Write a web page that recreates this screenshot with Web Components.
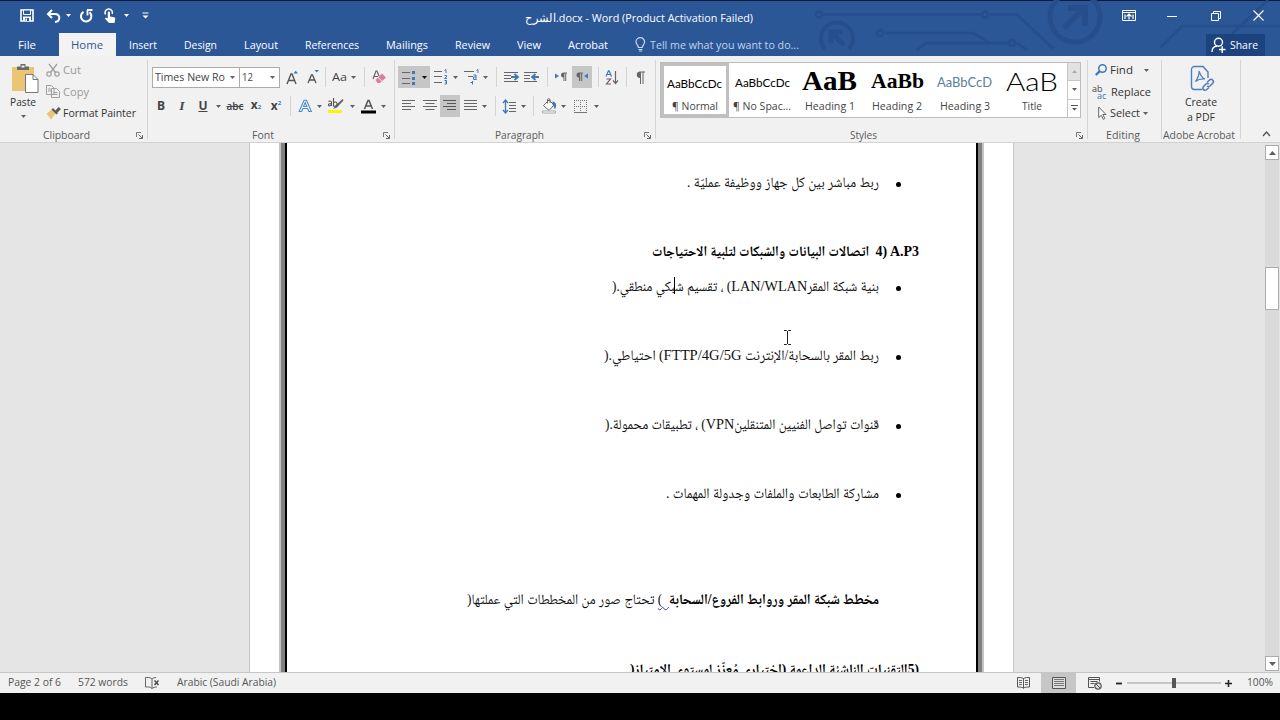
<!DOCTYPE html>
<html lang="en">
<head>
<meta charset="utf-8">
<title>الشرح.docx - Word</title>
<style>
	html, body {
		margin: 0;
		height: 100%;
		overflow: hidden;
		background: #000;
	}

	body {
		font: 11.5px/16px "Open Sans", "Noto Sans", sans-serif;
		color: #444;
	}
</style>
</head>
<body>
<word-window></word-window>

<script>
// name: [width, height, markup]
const ICONS = {
	save: [14, 13, '<path d="M1 1h12v11H1z" fill="none" stroke="#fff" stroke-width="1.6"/><path d="M3.5 1h7v4.500h-7z" fill="#2b579a" stroke="#fff"/><path d="M3 7.500h8V12H3z" fill="#fff"/><path d="M5 9h4v3H5z" fill="#2b579a"/><path d="M5.500 9.500h1.500V12H5.500z" fill="#fff"/>'],
	undo: [15, 14, '<path d="M6 1L2 5l4 4M2.500 5h6.500c6 0 5.500 7.500 0 8" fill="none" stroke="#fff" stroke-width="2"/>'],
	redo: [14, 14, '<path d="M4.500 2.800A5.200 5.200 0 1 0 10.500 3.300" fill="none" stroke="#fff" stroke-width="2"/><path d="M8 1h5.500M8.500 1v5.500" fill="none" stroke="#fff" stroke-width="1.800"/>'],
	touch: [14, 16, '<path d="M2.500 6.500A3.700 3.700 0 1 1 9.200 6" fill="none" stroke="#fff" stroke-width="1.500"/><path d="M4.800 4.500c0-1.400 2.200-1.400 2.200 0v4l4 .8c1 .3 1.300.8 1.200 1.700L11.500 15H6L2 10.800c0-1.200 1.500-1.300 2.800-.2z" fill="#fff"/>'],
	customize: [7, 7, '<path d="M.5 1h6" stroke="#fff"/><path d="M.5 3.500h6l-3 3z" fill="#fff"/>'],
	ribbonopts: [14, 11, '<path d="M.5.5h13v10H.5zM1 2.500h12" fill="none" stroke="#fff"/><path d="M7 9.500v-5M4.500 6.500L7 4l2.500 2.500M3 4.500V9M11 4.500V9" fill="none" stroke="#fff" stroke-width="1.200"/>'],
	minimize: [10, 10, '<path d="M0 5.500h10" stroke="#fff"/>'],
	restore: [10, 10, '<path d="M.5 2.500h7v7h-7zM2.500 2.500v-2h7v7h-2" fill="none" stroke="#fff"/>'],
	close: [11, 11, '<path d="M.5.5l10 10M10.500.5l-10 10" stroke="#fff" stroke-width="1.100"/>'],
	bulb: [11, 15, '<path d="M3.500 10.500c0-2-2.500-3-2.500-5.500a4.300 4.300 0 0 1 8.600 0c0 2.500-2.400 3.500-2.400 5.500zM3.500 12.500h4M4 14h3" fill="none" stroke="#c9d8ef" stroke-width="1.200"/>'],
	share: [15, 16, '<circle cx="7.500" cy="5.200" r="4" fill="none" stroke="#fff" stroke-width="1.400"/><path d="M1 15c0-3.500 2-5.800 5-5.800M8 12.500h6.500M11.200 9.200V16" fill="none" stroke="#fff" stroke-width="1.400"/>'],
	paste: [28, 29, '<path d="M1 3h22v24H1z" fill="#ecc572"/><path d="M6 6V2.500h3.500V0h5v2.500H18V6z" fill="#6a6a6a"/><path d="M10.500 1.500h3v2h-3z" fill="#f1f1f1"/><path d="M14.500 10.500h7.500l5 5v13H14.500z" fill="#fff" stroke="#777"/><path d="M22 10.500v5h5" fill="none" stroke="#777"/>'],
	cut: [14, 14, '<path d="M3 1l6.500 8.500M11 1L4.500 9.500" stroke="#a0a0a0" stroke-width="1.300"/><circle cx="3" cy="11" r="2.200" fill="none" stroke="#a0a0a0" stroke-width="1.200"/><circle cx="11" cy="11" r="2.200" fill="none" stroke="#a0a0a0" stroke-width="1.200"/>'],
	copy: [14, 13, '<path d="M.5.500h5l2.500 2.500v6.500H.5zM5.500 3.500h5l3 3v6h-8z" fill="#f1f1f1" stroke="#a0a0a0"/><path d="M2 4h3M2 6h3M7.500 7.500h4M7.500 9.500h4" stroke="#a0a0a0"/>'],
	brush: [15, 13, '<path d="M6 2l4 4-5 6.500L.5 6.800z" fill="#ecc572"/><path d="M5.500 2.500L7 1l5 5-1.500 1.500zM9 4l3.500-4L15 2l-4 4z" fill="#5b5b5b"/>'],
	launcher: [7, 7, '<path d="M.5 5V.5H5" fill="none" stroke="#777"/><path d="M2.500 2.500L6 6M6.500 3v3.500H3" fill="none" stroke="#666"/>'],
	caret: [5, 3, '<path d="M0 0h5L2.500 3z" fill="#606060"/>'],
	caretdark: [5, 3, '<path d="M0 0h5L2.500 3z" fill="#111"/>'],
	caretwhite: [5, 3, '<path d="M0 0h5L2.500 3z" fill="#fff"/>'],
	grow: [12, 15, '<path d="M1 14L5 4h1l4 10M2.500 10.500h6" fill="none" stroke="#555" stroke-width="1.400"/><path d="M7.500 3.500L9.700.8 12 3.500z" fill="#3f78b5"/>'],
	shrink: [12, 14, '<path d="M1 13L4.500 5h1L9 13M2.500 10h5" fill="none" stroke="#555" stroke-width="1.300"/><path d="M7.500 0H12L9.700 2.500z" fill="#3f78b5"/>'],
	eraser: [14, 14, '<path d="M1 9L4 1h1l2 5M2 6.500h4" fill="none" stroke="#666" stroke-width="1.200"/><path d="M10 3.500l4 4-6 5.500H5.500L3.500 10z" fill="#dc7f98"/><path d="M6 7.500l4.300 4" stroke="#f1f1f1"/>'],
	effect: [15, 14, '<path d="M1.200 12.500L6 1.200h2.500l4.800 11.300h-2.500l-1.100-3H4.800l-1.100 3zM5.500 7.500h3.400L7.200 3.400z" fill="#fff" stroke="#4c8bd0" stroke-width="1.100"/>'],
	highlight: [17, 16, '<path d="M1 12h14v3H1z" fill="#fdf400"/><path d="M15.500 1L9 7l-3 4 4-1.500 6.500-7z" fill="#666"/><path d="M1.500 3.500c1-.8 3-.8 3 1v3.500M4.500 5.500C2 5.500 1.200 6.200 1.500 7.200c.4 1 2.300.8 3-.7M6.500 0v8c2.500.8 3.800-1 3.500-2.500C9.700 3.700 7.500 3.500 6.500 5" fill="none" stroke="#555" stroke-width="1.100"/>'],
	fontcolor: [15, 15, '<path d="M0 11.500h15v3H0z" fill="#000"/><path d="M3.500 10L7 1.500h1L11.500 10M5 7h5" fill="none" stroke="#555" stroke-width="1.500"/>'],
	bullets: [13, 15, '<path d="M0 2.500h8M0 8.500h8M0 13.500h8" stroke="#666"/><path d="M10 1h3v3h-3zM10 7h3v3h-3zM10 12h3v3h-3z" fill="#3f78b5"/>'],
	numbering: [14, 16, '<path d="M0 2.500h8M0 7.500h8M0 13.500h8" stroke="#666"/><path d="M10.500 1.500L12 .5V4M10.500 6.500h2v1.500l-2 1.500h2.500M10.500 11.500h2v3.500h-2M11 13h1.500" fill="none" stroke="#3f78b5"/>'],
	multilevel: [16, 16, '<path d="M0 2.500h10M4 7.500h5M6.500 13.500H8" stroke="#666"/><path d="M12.500 1.500L14 .5V4M9.500 6h2.500v4.500M12 8H9.500v2.500h3M8.500 12v3.500" fill="none" stroke="#3f78b5"/>'],
	outdent: [15, 12, '<path d="M0 1.500h14M0 4.500h7M0 7.500h7M0 10.500h14" stroke="#666"/><path d="M7 6h6M10.500 3l3.500 3-3.500 3" fill="none" stroke="#3f78b5" stroke-width="1.800"/>'],
	indent: [15, 12, '<path d="M0 1.500h13M0 4.500h6M0 7.500h6M0 10.500h13" stroke="#666"/><path d="M15 6H9M11.500 3L8 6l3.500 3" fill="none" stroke="#3f78b5" stroke-width="1.800"/>'],
	ltr: [12, 10, '<path d="M0 1.500v5L4 4z" fill="#3f78b5"/><path d="M8.500 5.500a2.500 2.500 0 0 1 0-5H12v1h-.8v7.500h-1V1.500h-.8v7.500h-1z" fill="#666"/>'],
	rtl: [12, 10, '<path d="M12 1.500v5L8 4z" fill="#3f78b5"/><path d="M3 5.500a2.500 2.500 0 0 1 0-5h4v1h-.8v7.500h-1V1.500h-.9v7.500H3z" fill="#666"/>'],
	sort: [14, 15, '<path d="M1 6.500L3.500.8h.6l2.400 5.700M2 4.500h3.500" fill="none" stroke="#3f78b5" stroke-width="1.200"/><path d="M1.500 9h4L1.500 14h4.500" fill="none" stroke="#7a5276" stroke-width="1.200"/><path d="M10.500 1v12M8 10.500l2.500 3 2.500-3" fill="none" stroke="#666" stroke-width="1.200"/>'],
	pilcrow: [10, 13, '<path d="M4.500 7A3.300 3.300 0 0 1 4.500.5H10v1H8.500V13h-1V1.500h-1.500V13H5V7z" fill="#666"/>'],
	left: [14, 12, '<path d="M0 .5h13M0 3.500h9M0 6.500h13M0 9.500h9" stroke="#666"/>'],
	center: [14, 12, '<path d="M0 .5h14M2.500 3.500h9M0 6.500h14M2.500 9.500h9" stroke="#666"/>'],
	right: [14, 12, '<path d="M0 .5h13M4 3.500h9M0 6.500h13M4 9.500h9" stroke="#555"/>'],
	justify: [14, 12, '<path d="M0 .5h13M0 3.500h13M0 6.500h13M0 9.500h13" stroke="#666"/>'],
	spacing: [14, 15, '<path d="M6 3.500h7M6 6.500h7M6 9.500h7M6 12.500h7" stroke="#666"/><path d="M2.500 1.500v12M0 4l2.500-3L5 4M0 11l2.500 3L5 11" fill="none" stroke="#3f78b5" stroke-width="1.300"/>'],
	shading: [17, 16, '<path d="M2.500 7.500L8 2l5 5-5 5.500z" fill="#fff" stroke="#666"/><path d="M6.500 5.500V2c0-1.800 2.500-1.800 2.500 0v3" fill="none" stroke="#666"/><path d="M11.500 3.500c4 .5 4.500 4 2.500 8-1-2.500-1.500-4-2.500-5z" fill="#3f78b5"/><path d="M1.500 13h13v2h-13z" fill="#fff" stroke="#aaa"/>'],
	borders: [13, 13, '<path d="M0 .5h13M0 6.500h13M.5 0v12M6.500 0v12M12.500 0v12" fill="none" stroke="#777" stroke-dasharray="1 1"/><path d="M0 12.500h13" stroke="#777"/>'],
	find: [12, 12, '<circle cx="7.500" cy="4.500" r="3.700" fill="none" stroke="#3f78b5" stroke-width="1.500"/><path d="M4.800 7.200L.8 11" stroke="#3f78b5" stroke-width="2.300"/>'],
	select: [9, 14, '<path d="M.7 1l7.300 7.500H4.800l2 4-1.500.8-2-4L.7 11.500z" fill="#fff" stroke="#666"/>'],
	pdf: [25, 28, '<path d="M12 24.500H4.500a3 3 0 0 1-3-3v-17a3 3 0 0 1 3-3H13l5 5.500v6" fill="none" stroke="#4e7cc0" stroke-width="1.400"/><path d="M9 6c1.500 4 2.500 7 6 8-3-.3-7 .5-9.500 2.500C7.500 13.500 9.500 9 9 6z" fill="none" stroke="#4e7cc0" stroke-width="1.200"/><path d="M17 17.500l2.500-2.500c2-2 5.300.8 3.200 3.200L20 21c-1 .8-2 .8-3 0M19 19c-1-.8-2-.8-3 0l-2.500 2.500c-2 2.400 1 5 3.200 3L19 22.500" fill="none" stroke="#4e7cc0" stroke-width="1.500"/>'],
	collapse: [9, 6, '<path d="M1 5l3.500-4L8 5" fill="none" stroke="#555" stroke-width="1.400"/>'],
	up: [7, 4, '<path d="M0 4h7L3.500 0z" fill="#606060"/>'],
	down: [7, 4, '<path d="M0 0h7L3.500 4z" fill="#606060"/>'],
	upoff: [5, 3, '<path d="M0 3h5L2.500 0z" fill="#aaa"/>'],
	more: [7, 6, '<path d="M0 .5h7" stroke="#555"/><path d="M1 3h5L3.500 5.500z" fill="#555"/>'],
	proof: [15, 12, '<path d="M7 2C5.500 0 2 .5.500.500v9.500c2 0 5-.5 6.500 1.500V2c1-1 2.500-1.500 4-1.500M7 11.500c1-1 3-1.500 5-1.500" fill="none" stroke="#666"/><path d="M9.500 3.500l4 4.500M13.500 3.500l-4 4.500" stroke="#444" stroke-width="1.400"/>'],
	read: [13, 12, '<path d="M6.500 1.500C5 .5 2.500.500.500.500v9.500c2 0 4.500 0 6 1 1.500-1 4-1 6-1V.5c-2 0-4.500 0-6 1v10" fill="none" stroke="#555"/><path d="M2 3.500h3M2 5.500h3M2 7.500h3M8 3.500h3M8 5.500h3M8 7.500h3" stroke="#666"/>'],
	print: [14, 12, '<path d="M.5.5h13v11H.5z" fill="#ddd" stroke="#555"/><path d="M2 2.500h10M2 4.500h10M2 6.500h10M2 8.500h10" stroke="#777"/>'],
	web: [14, 13, '<path d="M6 10.500H.5v-10h11v4M.5 2.500h11M2.500 4.500h7M2.500 6.500h4" fill="none" stroke="#555"/><circle cx="10" cy="9" r="3.200" fill="#ddd" stroke="#555" stroke-width="1.200"/><path d="M8 7l4 4" stroke="#555"/>'],
	minus: [7, 7, '<path d="M0 3.500h6" stroke="#222" stroke-width="1.800"/>'],
	plus: [7, 7, '<path d="M0 3.500h7M3.500 0v7" stroke="#222" stroke-width="1.600"/>'],
	ibeam: [7, 15, '<path d="M0 .5h2.500l1 1 1-1H7M3.500 1v13M0 14.500h2.500l1-1 1 1H7" fill="none" stroke="#222"/>']
};

class WordIcon extends HTMLElement {
	constructor() {
		super();
		this.attachShadow({ mode: 'open' });
	}

	connectedCallback() {
		const [w, h, markup] = ICONS[this.getAttribute('name')];
		this.shadowRoot.innerHTML = `
			<style>
				:host { display: inline-flex; flex: none; }
				svg { display: block; overflow: visible; }
			</style>
			<svg width="${w}" height="${h}" viewBox="0 0 ${w} ${h}">${markup}</svg>
		`;
	}
}

/** A cell of fixed width that centres what it holds; "on" is the pressed look */
class ToolCell extends HTMLElement {
	constructor() {
		super();
		this.attachShadow({ mode: 'open' });
	}

	connectedCallback() {
		const icon = this.getAttribute('icon');
		this.shadowRoot.innerHTML = `
			<style>
				:host {
					display: flex;
					flex: none;
					align-items: center;
					justify-content: center;
					width: ${this.getAttribute('w')}px;
					height: 22px;
				}
				:host([on]) { background: #c6c6c6; }
				:host([sep])::before {
					content: "";
					width: 1px;
					height: 20px;
					background: #d4d4d4;
				}
			</style>
			${icon ? `<word-icon name="${icon}"></word-icon>` : ''}
			<slot></slot>
		`;
	}
}

class RibbonGroup extends HTMLElement {
	constructor() {
		super();
		this.attachShadow({ mode: 'open' });
	}

	connectedCallback() {
		this.shadowRoot.innerHTML = `
			<style>
				:host {
					display: flex;
					flex: none;
					flex-direction: column;
					box-sizing: border-box;
					width: ${this.getAttribute('w')}px;
					height: 86px;
				}
				.main {
					box-sizing: border-box;
					border-right: 1px solid #d4d4d4;
					margin-top: 4px;
					height: 67px;
				}
				footer {
					display: flex;
					align-items: center;
					height: 12px;
					padding-right: 4px;
					border-right: 1px solid #d4d4d4;
					color: #5a5a5a;
				}
				footer div {
					flex: 1;
					display: flex;
					justify-content: center;
					margin-top: 4px;
					padding-right: ${this.getAttribute('shift') || 0}px;
				}
				footer word-icon { margin-top: 5px; }
			</style>
			<div class="main"><slot></slot></div>
			<footer>
				<div><fit-text w="${this.getAttribute('lw')}">${this.getAttribute('label')}</fit-text></div>
				${this.hasAttribute('launcher') ? '<word-icon name="launcher"></word-icon>' : ''}
			</footer>
		`;
	}
}

class StyleTile extends HTMLElement {
	constructor() {
		super();
		this.attachShadow({ mode: 'open' });
	}

	connectedCallback() {
		this.shadowRoot.innerHTML = `
			<style>
				:host {
					display: flex;
					flex: none;
					flex-direction: column;
					align-items: center;
					box-sizing: border-box;
					width: 67.5px;
					height: 54px;
					overflow: hidden;
				}
				:host([on]) { border: 3px solid #c0c0c0; }
				.preview {
					display: flex;
					align-items: center;
					height: 35px;
					color: #000;
				}
				:host([on]) .preview { height: 32px; }
			</style>
			<div class="preview"><slot></slot></div>
			<fit-text w="${this.getAttribute('lw')}">${this.getAttribute('label')}</fit-text>
		`;
	}
}

class TitleBar extends HTMLElement {
	constructor() {
		super();
		this.attachShadow({ mode: 'open' });
		this.shadowRoot.innerHTML = `
			<style>
				:host {
					display: block;
					position: relative;
					height: 56px;
					box-sizing: border-box;
					background: #2b5797;
					border-top: 1px solid #0a1a3c;
					color: #fff;
				}
				.art { position: absolute; left: 800px; top: -1px; }
				.top, .tabs { position: relative; display: flex; align-items: center; }
				.top { height: 29px; }
				.quick, .controls { display: flex; align-items: center; }
				.quick { width: 509px; padding-left: 16px; }
				.controls { flex: 1; justify-content: flex-end; }
				.title { margin-top: 5px; }
				.tabs { height: 23px; margin-top: 3px; padding-left: 18px; }
				.tabs fit-text { margin-right: 27px; }
				.home {
					display: flex;
					align-items: center;
					justify-content: center;
					width: 57px;
					height: 23px;
					margin: 0 13px 0 -4px;
					background: #f3f3f3;
					color: #2b579a;
				}
				.home fit-text { margin: 0 1px 0 0; }
				.tabs word-icon { margin-right: 4px; }
				.tell { color: #c3d3ea; }
				.share {
					display: flex;
					align-items: center;
					justify-content: center;
					width: 59px;
					height: 22px;
					margin: 0 15px 0 auto;
					background: #1d437e;
				}
				.share fit-text { margin: 0 2px 0 0; }
			</style>
			<svg class="art" width="480" height="56" viewBox="800 0 480 56" fill="none" stroke="#264e8b" stroke-width="2.500">
				<path d="M823 14.500h158M990 14.500h27l36 34M885 33h88l17 10h18M917 50l9-7h64M1017 43l10 7M1160 48l22-22h98M1232 34l36-34"/>
				<circle cx="819" cy="14.500" r="3"/>
				<circle cx="985" cy="14.500" r="3"/>
				<circle cx="880" cy="33" r="3"/>
				<circle cx="1012" cy="43" r="3"/>
				<path d="M825 49a16 16 0 1 1 24 0" stroke-width="4"/>
				<path d="M844 45l-12-12M831 43V32h12" stroke-width="5"/>
				<circle cx="1075" cy="17" r="25" stroke-width="5"/>
				<path d="M1064 28l20-20M1068 8h17v18" stroke-width="6"/>
			</svg>
			<div class="top">
				<div class="quick">
					<tool-cell w="22" icon="save"></tool-cell>
					<tool-cell w="31" icon="undo"></tool-cell>
					<tool-cell w="5" icon="caretwhite" style="margin-left:-3px"></tool-cell>
					<tool-cell w="26" icon="redo" style="margin-left:2px"></tool-cell>
					<tool-cell w="22" icon="touch"></tool-cell>
					<tool-cell w="11" icon="caretwhite"></tool-cell>
					<tool-cell w="27" icon="customize"></tool-cell>
				</div>
				<fit-text class="title" w="228">الشرح.docx - Word (Product Activation Failed)</fit-text>
				<div class="controls">
					<tool-cell w="43" icon="ribbonopts"></tool-cell>
					<tool-cell w="44" icon="minimize"></tool-cell>
					<tool-cell w="43" icon="restore"></tool-cell>
					<tool-cell w="43" icon="close"></tool-cell>
				</div>
			</div>
			<div class="tabs">
				<fit-text w="18">File</fit-text>
				<div class="home"><fit-text w="32">Home</fit-text></div>
				<fit-text w="28">Insert</fit-text>
				<fit-text w="33">Design</fit-text>
				<fit-text w="34">Layout</fit-text>
				<fit-text w="54">References</fit-text>
				<fit-text w="42">Mailings</fit-text>
				<fit-text w="35">Review</fit-text>
				<fit-text w="24">View</fit-text>
				<fit-text w="40">Acrobat</fit-text>
				<word-icon name="bulb"></word-icon>
				<fit-text class="tell" w="149">Tell me what you want to do...</fit-text>
				<div class="share"><word-icon name="share"></word-icon><fit-text w="28">Share</fit-text></div>
			</div>
		`;
	}
}

class WordRibbon extends HTMLElement {
	constructor() {
		super();
		this.attachShadow({ mode: 'open' });
		this.shadowRoot.innerHTML = `
			<style>
				:host {
					display: flex;
					box-sizing: border-box;
					height: 87px;
					background: #f1f1f1;
					border-bottom: 1px solid #d2d2d2;
				}
				.row { display: flex; align-items: center; height: 22px; margin-top: 6px; }
				.row + .row { margin-top: 7px; }
				.clip { display: flex; }
				.paste {
					display: flex;
					flex-direction: column;
					align-items: center;
					width: 46px;
					padding-top: 4px;
					color: #333;
				}
				.paste word-icon:first-child { margin-left: 3px; }
				.paste fit-text { margin: 1px 0 5px; }
				.lines { display: flex; flex-direction: column; gap: 5.500px; padding-top: 2px; color: #333; }
				.lines div { display: flex; align-items: center; height: 16px; gap: 3px; }
				.off { color: #999; }
				.combo {
					display: flex;
					align-items: center;
					justify-content: space-between;
					box-sizing: border-box;
					height: 21px;
					padding: 0 4px 0 2px;
					border: 1px solid #ababab;
					background: #fff;
				}
				b, i, u, s { font-size: 12px; color: #444; }
				i { font-family: "Liberation Serif", serif; font-weight: bold; font-size: 13.500px; }
				u { font-weight: bold; }
				s { font-size: 10px; font-weight: 600; }
				b small { font-size: 6px; color: #3f78b5; }
				sup { line-height: 0; }
				.gallery {
					display: flex;
					box-sizing: border-box;
					width: 421px;
					height: 56px;
					margin: 2px 0 0 4px;
					border: 1px solid #bdbdbd;
					background: #fff;
				}
				.scroll {
					display: flex;
					flex-direction: column;
					flex: 1;
					margin-left: 1px;
					border-left: 1px solid #c6c6c6;
				}
				.scroll div {
					display: flex;
					flex: 1;
					align-items: center;
					justify-content: center;
					border-bottom: 1px solid #c6c6c6;
				}
				.scroll div:first-child { background: #e1e1e1; }
				.scroll div:last-child { border: 0; }
				.preview { font-family: Lato, sans-serif; margin-top: 4px; }
				.serif { font-family: "Liberation Serif", serif; font-weight: bold; }
				.big { line-height: 32px; margin-top: 0; }
				.edit { padding: 2px 0 0 7px; }
				.edit word-icon:last-child { margin-left: 8px; }
				.swap { display: flex; flex-direction: column; font-size: 9px; line-height: 7px; width: 16px; color: #444; }
				.swap span:last-child { margin-left: 5px; color: #3f78b5; }
				.acrobat {
					display: flex;
					flex-direction: column;
					align-items: center;
					padding: 5px 1px 0 0;
					color: #333;
					line-height: 15px;
				}
				.acrobat word-icon { margin: 0 0 1px 4px; }
				.end { display: flex; flex: 1; align-items: flex-end; justify-content: flex-end; padding: 0 9px 5px 0; }
			</style>
			<ribbon-group w="148" label="Clipboard" lw="47" shift="4" launcher>
				<div class="clip">
					<div class="paste">
						<word-icon name="paste"></word-icon>
						<fit-text w="26">Paste</fit-text>
						<word-icon name="caret"></word-icon>
					</div>
					<div class="lines">
						<div class="off"><word-icon name="cut"></word-icon><fit-text w="18">Cut</fit-text></div>
						<div class="off"><word-icon name="copy"></word-icon><fit-text w="26">Copy</fit-text></div>
						<div><word-icon name="brush" style="margin-right:-1px"></word-icon><fit-text w="73">Format Painter</fit-text></div>
					</div>
				</div>
			</ribbon-group>
			<ribbon-group w="247" label="Font" lw="22" shift="5" launcher>
				<div class="row" style="padding-left:4px">
					<div class="combo" style="width:88px"><fit-text w="70">Times New Ro</fit-text><word-icon name="caret"></word-icon></div>
					<div class="combo" style="width:40px;border-left:0"><fit-text w="11">12</fit-text><word-icon name="caret"></word-icon></div>
					<tool-cell w="23" icon="grow"></tool-cell>
					<tool-cell w="19" icon="shrink"></tool-cell>
					<tool-cell w="6" sep></tool-cell>
					<tool-cell w="22"><fit-text w="15">Aa</fit-text></tool-cell>
					<tool-cell w="7" icon="caret"></tool-cell>
					<tool-cell w="15" sep></tool-cell>
					<tool-cell w="14" icon="eraser"></tool-cell>
				</div>
				<div class="row" style="padding-left:2px">
					<tool-cell w="22"><b>B</b></tool-cell>
					<tool-cell w="20"><i>I</i></tool-cell>
					<tool-cell w="22"><u>U</u></tool-cell>
					<tool-cell w="9" icon="caret"></tool-cell>
					<tool-cell w="24"><s>abc</s></tool-cell>
					<tool-cell w="18"><b>x<small>2</small></b></tool-cell>
					<tool-cell w="22"><b>x<sup><small>2</small></sup></b></tool-cell>
					<tool-cell w="7" sep></tool-cell>
					<tool-cell w="22" icon="effect"></tool-cell>
					<tool-cell w="6" icon="caret"></tool-cell>
					<tool-cell w="27" icon="highlight"></tool-cell>
					<tool-cell w="6" icon="caret"></tool-cell>
					<tool-cell w="26" icon="fontcolor"></tool-cell>
					<tool-cell w="5" icon="caret"></tool-cell>
				</div>
			</ribbon-group>
			<ribbon-group w="261" label="Paragraph" lw="49" shift="1" launcher>
				<div class="row" style="padding-left:3px">
					<tool-cell w="32" on><word-icon name="bullets" style="margin-right:7px"></word-icon><word-icon name="caretdark"></word-icon></tool-cell>
					<tool-cell w="21" icon="numbering"></tool-cell>
					<tool-cell w="9" icon="caret"></tool-cell>
					<tool-cell w="23" icon="multilevel"></tool-cell>
					<tool-cell w="5" icon="caret"></tool-cell>
					<tool-cell w="16" sep></tool-cell>
					<tool-cell w="14" icon="outdent"></tool-cell>
					<tool-cell w="27" icon="indent"></tool-cell>
					<tool-cell w="4" sep></tool-cell>
					<tool-cell w="23" icon="ltr"></tool-cell>
					<tool-cell w="20" icon="rtl" on></tool-cell>
					<tool-cell w="12" sep></tool-cell>
					<tool-cell w="15" icon="sort"></tool-cell>
					<tool-cell w="14" sep></tool-cell>
					<tool-cell w="14" icon="pilcrow"></tool-cell>
				</div>
				<div class="row" style="padding-left:3px">
					<tool-cell w="21" icon="left"></tool-cell>
					<tool-cell w="21" icon="center"></tool-cell>
					<tool-cell w="20" icon="right" on></tool-cell>
					<tool-cell w="21" icon="justify"></tool-cell>
					<tool-cell w="6" icon="caret"></tool-cell>
					<tool-cell w="16" sep></tool-cell>
					<tool-cell w="14" icon="spacing"></tool-cell>
					<tool-cell w="13" icon="caret"></tool-cell>
					<tool-cell w="7" sep></tool-cell>
					<tool-cell w="24" icon="shading"></tool-cell>
					<tool-cell w="5" icon="caret"></tool-cell>
					<tool-cell w="29" icon="borders"></tool-cell>
					<tool-cell w="3" icon="caret"></tool-cell>
				</div>
			</ribbon-group>
			<ribbon-group w="432" label="Styles" lw="27" shift="6" launcher>
				<div class="gallery">
					<style-tile label="¶ Normal" lw="46" on><fit-text class="preview" w="55" size="11.5">AaBbCcDc</fit-text></style-tile>
					<style-tile label="¶ No Spac..." lw="58"><fit-text class="preview" w="55" size="11.5">AaBbCcDc</fit-text></style-tile>
					<style-tile label="Heading 1" lw="50"><fit-text class="serif big" w="55" size="27">AaB</fit-text></style-tile>
					<style-tile label="Heading 2" lw="50"><fit-text class="serif" w="53" size="21">AaBb</fit-text></style-tile>
					<style-tile label="Heading 3" lw="50"><fit-text class="preview" w="55" size="12.5" style="color:#5b8097">AaBbCcD</fit-text></style-tile>
					<style-tile label="Title" lw="20"><fit-text class="preview big" w="52" size="26" style="font-weight:300;margin-top:0">AaB</fit-text></style-tile>
					<div class="scroll">
						<div><word-icon name="upoff"></word-icon></div>
						<div><word-icon name="caret"></word-icon></div>
						<div><word-icon name="more"></word-icon></div>
					</div>
				</div>
			</ribbon-group>
			<ribbon-group w="74" label="Editing" lw="34">
				<div class="lines edit">
					<div><word-icon name="find"></word-icon><fit-text w="23">Find</fit-text><word-icon name="caret"></word-icon></div>
					<div style="margin-left:-3px"><span class="swap"><span>ab</span><span>ac</span></span><fit-text w="40">Replace</fit-text></div>
					<div style="padding-left:3px"><word-icon name="select"></word-icon><fit-text w="30">Select</fit-text><word-icon name="caret" style="margin:0"></word-icon></div>
				</div>
			</ribbon-group>
			<ribbon-group w="79" label="Adobe Acrobat" lw="72">
				<div class="acrobat">
					<word-icon name="pdf"></word-icon>
					<fit-text w="32">Create</fit-text>
					<fit-text w="28">a PDF</fit-text>
				</div>
			</ribbon-group>
			<div class="end"><word-icon name="collapse"></word-icon></div>
		`;
	}
}

/** One right to left line; "gap" is the space above it, "bullet" draws the list dot */
class DocLine extends HTMLElement {
	constructor() {
		super();
		this.attachShadow({ mode: 'open' });
	}

	connectedCallback() {
		const bullet = this.hasAttribute('bullet');
		this.shadowRoot.innerHTML = `
			<style>
				:host {
					display: flex;
					flex: none;
					align-items: center;
					direction: rtl;
					height: 24px;
					line-height: 24px;
					margin-top: ${this.getAttribute('gap')}px;
					padding-right: ${bullet ? 18 : this.getAttribute('indent') || 0}px;
				}
				i { width: 5px; height: 5px; margin: 5px 0 0 17px; border-radius: 50%; background: #000; }
			</style>
			${bullet ? '<i></i>' : ''}
			<slot></slot>
		`;
	}
}

class DocPage extends HTMLElement {
	constructor() {
		super();
		this.attachShadow({ mode: 'open' });
		this.shadowRoot.innerHTML = `
			<style>
				:host {
					display: flex;
					flex: none;
					box-sizing: border-box;
					width: 765px;
					height: 529px;
					padding: 0 29px;
					border: solid #c6c6c6;
					border-width: 0 1px;
					background: #fff;
				}
				.frame {
					position: relative;
					flex: 1;
					display: flex;
					flex-direction: column;
					box-sizing: border-box;
					padding: 0 57px 0 0;
					border: solid #000;
					border-width: 0 2px;
					overflow: hidden;
					font: 14.500px/24px "Liberation Serif", "Noto Naskh Arabic", "Noto Sans Arabic", "DejaVu Sans", serif;
					color: #111;
				}
				.edge { width: 4px; background: #808080; }
				.edge.left { border-left: 2px solid #c4c4c4; }
				.edge.right { border-right: 2px solid #c4c4c4; }
				b { color: #000; }
				.latin { font-size: 15.500px; line-height: 1; }
				.wavy { text-decoration: underline wavy #3a3ad0 1px; text-underline-offset: 2px; text-decoration-skip-ink: none; }
				.ibeam { position: absolute; left: 497px; top: 187px; }
				.caret { position: absolute; left: 387px; top: 134px; width: 1px; height: 17px; background: #000; }
			</style>
			<div class="edge left"></div>
			<div class="frame">
				<doc-line gap="27" bullet><fit-text w="192">ربط مباشر بين كل جهاز ووظيفة عمليّة .</fit-text></doc-line>
				<doc-line gap="45"><fit-text w="267"><b><bdi class="latin" dir="ltr">4) A.P3</bdi>&nbsp; اتصالات البيانات والشبكات لتلبية الاحتياجات</b></fit-text></doc-line>
				<doc-line gap="11" bullet><fit-text w="267">بنية شبكة المقر<span class="latin">LAN/WLAN</span>) ، تقسيم شبكي منطقي.(</fit-text></doc-line>
				<doc-line gap="45" bullet><fit-text w="275">ربط المقر بالسحابة/الإنترنت <span class="latin">FTTP/4G/5G</span>) احتياطي.(</fit-text></doc-line>
				<doc-line gap="45" bullet><fit-text w="274">قنوات تواصل الفنيين المتنقلين<span class="latin">VPN</span>) ، تطبيقات محمولة.(</fit-text></doc-line>
				<doc-line gap="45" bullet><fit-text w="213">مشاركة الطابعات والملفات وجدولة المهمات .</fit-text></doc-line>
				<doc-line gap="82" indent="40"><fit-text w="412"><b>مخطط شبكة المقر وروابط الفروع/السحابة</b><span class="wavy">&nbsp; )</span> تحتاج صور من المخططات التي عملتها(</fit-text></doc-line>
				<doc-line gap="46"><fit-text w="289"><b>(5التقنيات الناشئة الداعمة (اختياري مُعزّز لمستوى الامتياز(</b></fit-text></doc-line>
				<span class="caret"></span>
				<word-icon class="ibeam" name="ibeam"></word-icon>
			</div>
			<div class="edge right"></div>
		`;
	}
}

class ScrollRail extends HTMLElement {
	constructor() {
		super();
		this.attachShadow({ mode: 'open' });
		this.shadowRoot.innerHTML = `
			<style>
				:host {
					display: flex;
					flex-direction: column;
					width: 14px;
					height: 526px;
					margin: 2px 1px 0 auto;
					background: #dadada;
				}
				div {
					display: flex;
					flex: none;
					align-items: center;
					justify-content: center;
					box-sizing: border-box;
					height: 15px;
					border: 1px solid #ababab;
					background: #fff;
				}
				.thumb { height: 43px; margin: 107px 0 auto; }
			</style>
			<div><word-icon name="up"></word-icon></div>
			<div class="thumb"></div>
			<div><word-icon name="down"></word-icon></div>
		`;
	}
}

class StatusBar extends HTMLElement {
	constructor() {
		super();
		this.attachShadow({ mode: 'open' });
		this.shadowRoot.innerHTML = `
			<style>
				:host {
					display: flex;
					align-items: center;
					box-sizing: border-box;
					height: 21px;
					padding: 0 7px 0 8px;
					border-top: 1px solid #c6c6c6;
					background: #f1f1f1;
					color: #555;
				}
				.info { display: flex; align-items: center; gap: 17px; flex: 1; }
				.slider {
					display: flex;
					align-items: center;
					justify-content: center;
					width: 94px;
					height: 10px;
					margin: 0 4px;
					background: linear-gradient(#c6c6c6, #c6c6c6) center / 100% 2px no-repeat;
				}
				.slider::before { content: ""; width: 4px; height: 10px; background: #555; }
				fit-text { margin-top: -2px; }
				.zoom { margin-left: 15px; }
				tool-cell { height: 20px; }
			</style>
			<div class="info">
				<fit-text w="53">Page 2 of 6</fit-text>
				<fit-text w="50">572 words</fit-text>
				<word-icon name="proof"></word-icon>
				<fit-text w="99">Arabic (Saudi Arabia)</fit-text>
			</div>
			<tool-cell w="36" icon="read"></tool-cell>
			<tool-cell w="35" icon="print" on></tool-cell>
			<tool-cell w="37" icon="web"></tool-cell>
			<word-icon name="minus" style="margin-left:3px"></word-icon>
			<div class="slider"></div>
			<word-icon name="plus"></word-icon>
			<fit-text class="zoom" w="26">100%</fit-text>
		`;
	}
}

class WordWindow extends HTMLElement {
	constructor() {
		super();
		this.attachShadow({ mode: 'open' });
		this.shadowRoot.innerHTML = `
			<style>
				:host { display: flex; flex-direction: column; width: 1280px; height: 693px; }
				.work { display: flex; flex: 1; min-height: 0; padding-left: 249px; background: #e5e5e5; overflow: hidden; }
			</style>
			<title-bar></title-bar>
			<word-ribbon></word-ribbon>
			<div class="work">
				<doc-page></doc-page>
				<scroll-rail></scroll-rail>
			</div>
			<status-bar></status-bar>
		`;
	}
}

/** Text condensed or stretched to exactly "w" pixels */
class FitText extends HTMLElement {
	constructor() {
		super();
		this.attachShadow({ mode: 'open' });
	}

	connectedCallback() {
		const w = Number(this.getAttribute('w'));
		const size = this.getAttribute('size');
		this.shadowRoot.innerHTML = `
			<style>
				:host { display: block; flex: none; width: ${w}px; ${size ? `font-size: ${size}px;` : ''} }
				div { direction: ltr; }
				span { display: inline-block; white-space: pre; transform-origin: 0 50%; }
			</style>
			<div><span><slot></slot></span></div>
		`;
		const span = this.shadowRoot.querySelector('span');
		span.style.direction = getComputedStyle(this).direction;
		const natural = span.getBoundingClientRect().width;
		if (natural) {
			span.style.transform = `scaleX(${w / natural})`;
		}
	}
}

customElements.define('word-window', WordWindow);
customElements.define('title-bar', TitleBar);
customElements.define('word-ribbon', WordRibbon);
customElements.define('ribbon-group', RibbonGroup);
customElements.define('style-tile', StyleTile);
customElements.define('doc-page', DocPage);
customElements.define('doc-line', DocLine);
customElements.define('scroll-rail', ScrollRail);
customElements.define('status-bar', StatusBar);
customElements.define('tool-cell', ToolCell);
customElements.define('word-icon', WordIcon);
customElements.define('fit-text', FitText);
</script>
</body>
</html>
